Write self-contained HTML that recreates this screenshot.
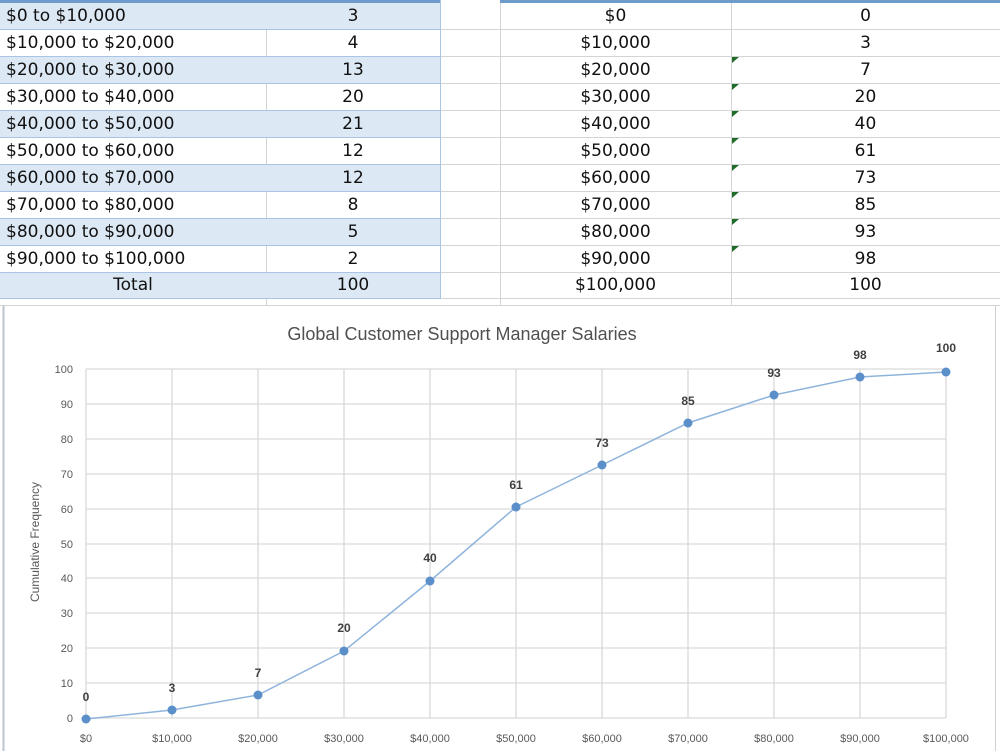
<!DOCTYPE html>
<html><head><style>
body{margin:0;width:1000px;height:751px;background:#fff;position:relative;overflow:hidden;font-family:"DejaVu Sans","Liberation Sans",sans-serif;font-size:17px;color:#111}
.r{position:absolute;height:27px;line-height:27px}
</style></head><body>
<svg width="1000" height="751" style="position:absolute;left:0;top:0">
<g fill="#dde8f5">
<rect x="0" y="3" width="440" height="26"/>
<rect x="0" y="56" width="440" height="27"/>
<rect x="0" y="110" width="440" height="27"/>
<rect x="0" y="164" width="440" height="27"/>
<rect x="0" y="218" width="440" height="27"/>
<rect x="0" y="272" width="440" height="26"/>
</g>
<g stroke="#d4d4d4" stroke-width="1">
<line x1="440" y1="29.5" x2="1000" y2="29.5"/><line x1="440" y1="56.5" x2="1000" y2="56.5"/>
<line x1="440" y1="83.5" x2="1000" y2="83.5"/><line x1="440" y1="110.5" x2="1000" y2="110.5"/>
<line x1="440" y1="137.5" x2="1000" y2="137.5"/><line x1="440" y1="164.5" x2="1000" y2="164.5"/>
<line x1="440" y1="191.5" x2="1000" y2="191.5"/><line x1="440" y1="218.5" x2="1000" y2="218.5"/>
<line x1="440" y1="245.5" x2="1000" y2="245.5"/><line x1="440" y1="272.5" x2="1000" y2="272.5"/>
<line x1="440" y1="298.5" x2="1000" y2="298.5"/>
<line x1="0" y1="305.5" x2="1000" y2="305.5"/>
<line x1="500.5" y1="0" x2="500.5" y2="306"/><line x1="731.5" y1="0" x2="731.5" y2="306"/>
<line x1="266.5" y1="29" x2="266.5" y2="56"/><line x1="266.5" y1="83" x2="266.5" y2="110"/>
<line x1="266.5" y1="137" x2="266.5" y2="164"/><line x1="266.5" y1="191" x2="266.5" y2="218"/>
<line x1="266.5" y1="245" x2="266.5" y2="272"/><line x1="266.5" y1="298" x2="266.5" y2="306"/>
</g>
<g stroke="#a9c4e4" stroke-width="1">
<line x1="0" y1="29.5" x2="440" y2="29.5"/><line x1="0" y1="56.5" x2="440" y2="56.5"/>
<line x1="0" y1="83.5" x2="440" y2="83.5"/><line x1="0" y1="110.5" x2="440" y2="110.5"/>
<line x1="0" y1="137.5" x2="440" y2="137.5"/><line x1="0" y1="164.5" x2="440" y2="164.5"/>
<line x1="0" y1="191.5" x2="440" y2="191.5"/><line x1="0" y1="218.5" x2="440" y2="218.5"/>
<line x1="0" y1="245.5" x2="440" y2="245.5"/><line x1="0" y1="272.5" x2="440" y2="272.5"/>
<line x1="0" y1="298.5" x2="440" y2="298.5"/>
<line x1="440.5" y1="0" x2="440.5" y2="299"/>
</g>
<rect x="0" y="0" width="440" height="3" fill="#6f9bcb"/>
<rect x="500" y="0" width="500" height="3" fill="#6f9bcb"/>
<g fill="#1e6b2a">
<polygon points="732,57 739,57 732,63"/><polygon points="732,84 739,84 732,90"/>
<polygon points="732,111 739,111 732,117"/><polygon points="732,138 739,138 732,144"/>
<polygon points="732,165 739,165 732,171"/><polygon points="732,192 739,192 732,198"/>
<polygon points="732,219 739,219 732,225"/><polygon points="732,246 739,246 732,252"/>
</g>
<line x1="3.5" y1="306" x2="3.5" y2="751" stroke="#bcc6d2" stroke-width="2"/>
<line x1="995.5" y1="306" x2="995.5" y2="751" stroke="#d0d0d0" stroke-width="1"/>
<text x="462" y="340" text-anchor="middle" font-family="Liberation Sans,sans-serif" font-size="18" fill="#505050">Global Customer Support Manager Salaries</text>
<g stroke="#d9d9d9" stroke-width="1.3">
<line x1="86" y1="369" x2="946" y2="369"/><line x1="86" y1="404" x2="946" y2="404"/>
<line x1="86" y1="439" x2="946" y2="439"/><line x1="86" y1="474" x2="946" y2="474"/>
<line x1="86" y1="509" x2="946" y2="509"/><line x1="86" y1="544" x2="946" y2="544"/>
<line x1="86" y1="578" x2="946" y2="578"/><line x1="86" y1="613" x2="946" y2="613"/>
<line x1="86" y1="648" x2="946" y2="648"/><line x1="86" y1="683" x2="946" y2="683"/>
<line x1="86" y1="718" x2="946" y2="718"/>
<line x1="86" y1="369" x2="86" y2="718"/><line x1="172" y1="369" x2="172" y2="718"/>
<line x1="258" y1="369" x2="258" y2="718"/><line x1="344" y1="369" x2="344" y2="718"/>
<line x1="430" y1="369" x2="430" y2="718"/><line x1="516" y1="369" x2="516" y2="718"/>
<line x1="602" y1="369" x2="602" y2="718"/><line x1="688" y1="369" x2="688" y2="718"/>
<line x1="774" y1="369" x2="774" y2="718"/><line x1="860" y1="369" x2="860" y2="718"/>
<line x1="946" y1="369" x2="946" y2="718"/>
</g>
<g font-family="Liberation Sans,sans-serif" font-size="11" fill="#595959" text-anchor="end">
<text x="73" y="373">100</text><text x="73" y="408">90</text><text x="73" y="443">80</text>
<text x="73" y="478">70</text><text x="73" y="513">60</text><text x="73" y="548">50</text>
<text x="73" y="582">40</text><text x="73" y="617">30</text><text x="73" y="652">20</text>
<text x="73" y="687">10</text><text x="73" y="722">0</text>
</g>
<g font-family="Liberation Sans,sans-serif" font-size="11" fill="#595959" text-anchor="middle">
<text x="86" y="742">$0</text><text x="172" y="742">$10,000</text><text x="258" y="742">$20,000</text>
<text x="344" y="742">$30,000</text><text x="430" y="742">$40,000</text><text x="516" y="742">$50,000</text>
<text x="602" y="742">$60,000</text><text x="688" y="742">$70,000</text><text x="774" y="742">$80,000</text>
<text x="860" y="742">$90,000</text><text x="946" y="742">$100,000</text>
</g>
<text transform="translate(39,542) rotate(-90)" text-anchor="middle" font-family="Liberation Sans,sans-serif" font-size="12" fill="#595959">Cumulative Frequency</text>
<polyline fill="none" stroke="#8fb4dc" stroke-width="1.5" points="86,719 172,710 258,695 344,651 430,581 516,507 602,465 688,423 774,395 860,377 946,372"/>
<g fill="#5b8fc9">
<circle cx="86" cy="719" r="4.5"/><circle cx="172" cy="710" r="4.5"/><circle cx="258" cy="695" r="4.5"/>
<circle cx="344" cy="651" r="4.5"/><circle cx="430" cy="581" r="4.5"/><circle cx="516" cy="507" r="4.5"/>
<circle cx="602" cy="465" r="4.5"/><circle cx="688" cy="423" r="4.5"/><circle cx="774" cy="395" r="4.5"/>
<circle cx="860" cy="377" r="4.5"/><circle cx="946" cy="372" r="4.5"/>
</g>
<g font-family="Liberation Sans,sans-serif" font-size="12" font-weight="bold" fill="#404040" text-anchor="middle">
<text x="86" y="701">0</text><text x="172" y="692">3</text><text x="258" y="677">7</text>
<text x="344" y="632">20</text><text x="430" y="562">40</text><text x="516" y="489">61</text>
<text x="602" y="447">73</text><text x="688" y="405">85</text><text x="774" y="377">93</text>
<text x="860" y="359">98</text><text x="946" y="352">100</text>
</g>
</svg>
<div class="r" style="top:3px;left:6px">$0 to $10,000</div>
<div class="r" style="top:30px;left:6px">$10,000 to $20,000</div>
<div class="r" style="top:57px;left:6px">$20,000 to $30,000</div>
<div class="r" style="top:84px;left:6px">$30,000 to $40,000</div>
<div class="r" style="top:111px;left:6px">$40,000 to $50,000</div>
<div class="r" style="top:138px;left:6px">$50,000 to $60,000</div>
<div class="r" style="top:165px;left:6px">$60,000 to $70,000</div>
<div class="r" style="top:192px;left:6px">$70,000 to $80,000</div>
<div class="r" style="top:219px;left:6px">$80,000 to $90,000</div>
<div class="r" style="top:246px;left:6px">$90,000 to $100,000</div>
<div class="r" style="top:272px;left:0;width:266px;text-align:center">Total</div>
<div style="position:absolute;left:266px;top:3px;width:174px;text-align:center;line-height:27px">3<br>4<br>13<br>20<br>21<br>12<br>12<br>8<br>5<br>2<br><span style="position:relative;top:-1px">100</span></div>
<div style="position:absolute;left:500px;top:3px;width:231px;text-align:center;line-height:27px">$0<br>$10,000<br>$20,000<br>$30,000<br>$40,000<br>$50,000<br>$60,000<br>$70,000<br>$80,000<br>$90,000<br><span style="position:relative;top:-1px">$100,000</span></div>
<div style="position:absolute;left:731px;top:3px;width:269px;text-align:center;line-height:27px">0<br>3<br>7<br>20<br>40<br>61<br>73<br>85<br>93<br>98<br><span style="position:relative;top:-1px">100</span></div>
</body></html>
